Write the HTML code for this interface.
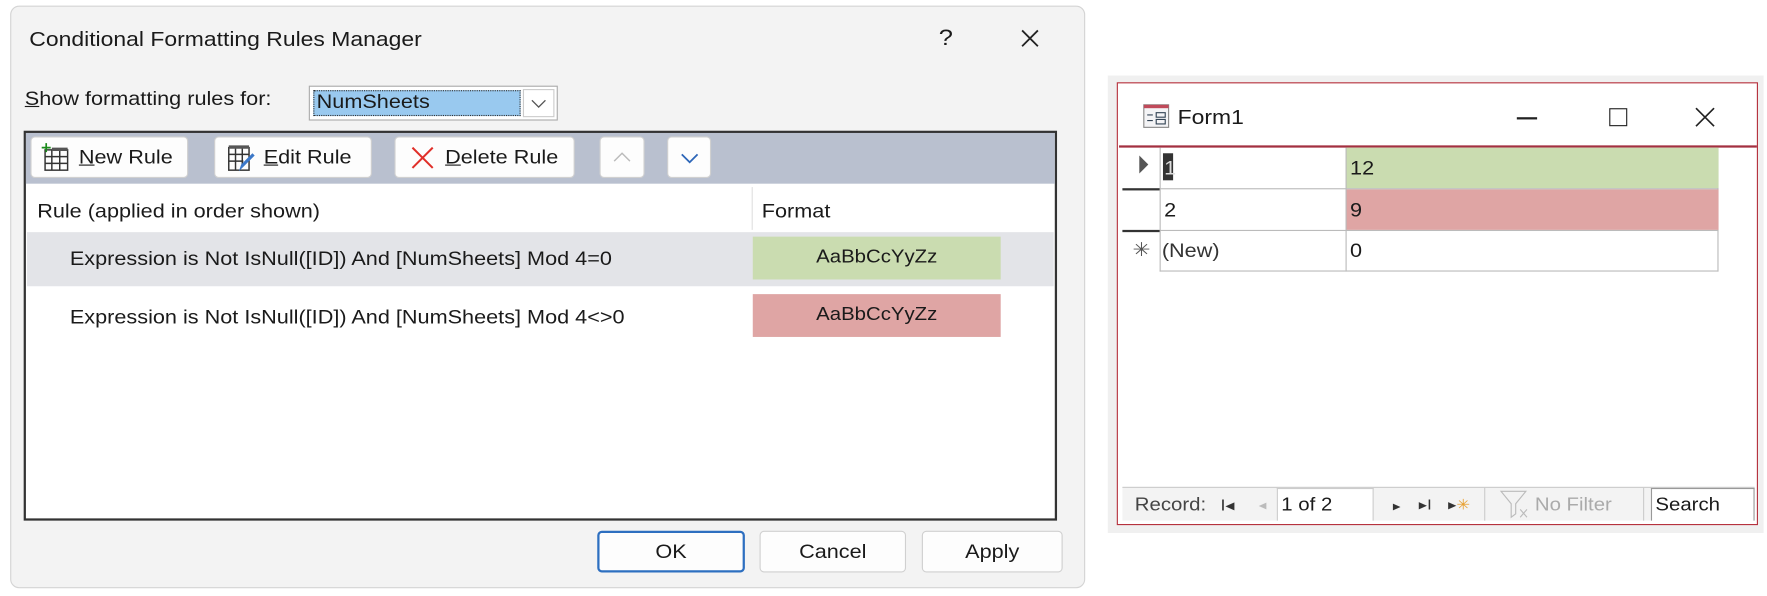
<!DOCTYPE html>
<html><head><meta charset="utf-8"><style>
*{box-sizing:border-box;margin:0;padding:0}
html,body{width:1767px;height:596px;overflow:hidden;background:#fff}
#w{position:absolute;left:0;top:0;width:1568px;height:529px;transform:scale(1.12691);transform-origin:0 0;font-family:"Liberation Sans",sans-serif;color:#1a1a1a}
.a{position:absolute}
.t{position:absolute;white-space:nowrap;font-size:17px;line-height:20px;transform:scaleX(1.13);transform-origin:0 50%}
.c{transform-origin:50% 50%}
.btn{position:absolute;background:#fdfdfd;border:1px solid #d0d0d0;border-radius:4px}
u{text-decoration:underline}
</style></head><body><div id="w">
<!-- Dialog -->
<div class="a" style="left:9px;top:5px;width:954px;height:517px;background:#f3f3f3;border:1px solid #d4d4d4;border-radius:8px"></div>
<div class="t" style="left:26px;top:25px;font-size:18px">Conditional Formatting Rules Manager</div>
<div class="t" style="left:833px;top:24px;font-size:20px">?</div>
<svg class="a" style="left:905px;top:25px" width="18" height="18"><path d="M2 2L16 16M16 2L2 16" stroke="#222" stroke-width="1.6"/></svg>
<div class="t" style="left:22px;top:78px"><u>S</u>how formatting rules for:</div>
<div class="a" style="left:274px;top:76px;width:221px;height:31px;background:#fff;border:1px solid #aaa"></div>
<div class="a" style="left:278px;top:80px;width:184px;height:23px;background:#99c9ef;border:1px dotted #333"></div>
<div class="t" style="left:281px;top:81px">NumSheets</div>
<div class="a" style="left:464px;top:79px;width:28px;height:25px;border:1px solid #ccc;background:#fff"></div>
<svg class="a" style="left:470px;top:86px" width="16" height="12"><path d="M2 3L8 9L14 3" stroke="#555" fill="none" stroke-width="1.2"/></svg>

<div class="a" style="left:21px;top:116px;width:917px;height:346px;border:2px solid #333;background:#fff"></div>
<div class="a" style="left:23px;top:118px;width:913px;height:45px;background:#b9c0cf"></div>
<div class="btn" style="left:27px;top:121px;width:140px;height:37px"></div>
<svg class="a" style="left:36px;top:126px" width="28" height="28"><g stroke="#333" fill="none" stroke-width="1.3"><rect x="4" y="7" width="20" height="18"/><path d="M4 13H24M4 19H24M10 7V25M17 7V25"/></g><rect x="10" y="5" width="14" height="3" fill="#555"/><path d="M5 1V9M1 5H9" stroke="#1a8a1a" stroke-width="1.5"/></svg>
<div class="t" style="left:70px;top:130px"><u>N</u>ew Rule</div>
<div class="btn" style="left:190px;top:121px;width:140px;height:37px"></div>
<svg class="a" style="left:200px;top:126px" width="28" height="28"><g stroke="#333" fill="none" stroke-width="1.3"><rect x="3" y="5" width="18" height="20"/><path d="M3 11H21M3 17H16M9 5V25M15 5V20"/></g><rect x="3" y="3" width="18" height="3" fill="#555"/><path d="M12 26L14 20L24 10L26 12L16 22Z" fill="#3c78c8"/></svg>
<div class="t" style="left:234px;top:130px"><u>E</u>dit Rule</div>
<div class="btn" style="left:350px;top:121px;width:160px;height:37px"></div>
<svg class="a" style="left:364px;top:129px" width="22" height="22"><path d="M2 2L20 20M20 2L2 20" stroke="#e0302a" stroke-width="1.8"/></svg>
<div class="t" style="left:395px;top:130px"><u>D</u>elete Rule</div>
<div class="btn" style="left:532px;top:121px;width:40px;height:37px"></div>
<svg class="a" style="left:543px;top:133px" width="18" height="12"><path d="M2 10L9 3L16 10" stroke="#bbb" fill="none" stroke-width="1.3"/></svg>
<div class="btn" style="left:592px;top:121px;width:39px;height:37px"></div>
<svg class="a" style="left:603px;top:134px" width="18" height="12"><path d="M2 3L9 10L16 3" stroke="#2d66b8" fill="none" stroke-width="1.6"/></svg>

<div class="t" style="left:33px;top:178px">Rule (applied in order shown)</div>
<div class="a" style="left:667px;top:166px;width:1px;height:38px;background:#e0e0e0"></div>
<div class="t" style="left:676px;top:178px">Format</div>
<div class="a" style="left:24px;top:206px;width:911px;height:48px;background:#e3e4e8"></div>
<div class="t" style="left:62px;top:220px">Expression is Not IsNull([ID]) And [NumSheets] Mod 4=0</div>
<div class="a" style="left:668px;top:210px;width:220px;height:38px;background:#cadcb0"></div>
<div class="t c" style="left:668px;top:219px;width:220px;text-align:center;font-size:16px">AaBbCcYyZz</div>
<div class="t" style="left:62px;top:272px">Expression is Not IsNull([ID]) And [NumSheets] Mod 4&lt;&gt;0</div>
<div class="a" style="left:668px;top:261px;width:220px;height:38px;background:#dfa5a4"></div>
<div class="t c" style="left:668px;top:270px;width:220px;text-align:center;font-size:16px">AaBbCcYyZz</div>

<div class="btn" style="left:530px;top:471px;width:131px;height:37px;border:2px solid #2d6fc0"></div>
<div class="t c" style="left:530px;top:480px;width:131px;text-align:center">OK</div>
<div class="btn" style="left:674px;top:471px;width:130px;height:37px"></div>
<div class="t c" style="left:674px;top:480px;width:130px;text-align:center">Cancel</div>
<div class="btn" style="left:818px;top:471px;width:125px;height:37px"></div>
<div class="t c" style="left:818px;top:480px;width:125px;text-align:center">Apply</div>

<!-- Form -->
<div class="a" style="left:983px;top:67px;width:582px;height:406px;background:#f0f0f0"></div>
<div class="a" style="left:991px;top:73px;width:569px;height:393px;background:#fff;border:1.5px solid #b5303c"></div>
<svg class="a" style="left:1014px;top:92px" width="24" height="22"><rect x="1" y="1" width="22" height="20" fill="#f4f4f6" stroke="#888"/><rect x="1" y="1" width="22" height="3" fill="#c04a5a"/><path d="M4 10H9M4 15H9M12 8H20V12H12ZM12 14H20V18H12Z" stroke="#345" fill="none"/></svg>
<div class="t" style="left:1045px;top:94px;font-size:18px">Form1</div>
<div class="a" style="left:1346px;top:104px;width:18px;height:1.5px;background:#222"></div>
<div class="a" style="left:1428px;top:96px;width:16px;height:16px;border:1.5px solid #222"></div>
<svg class="a" style="left:1504px;top:95px" width="18" height="18"><path d="M1 1L17 17M17 1L1 17" stroke="#222" stroke-width="1.5"/></svg>
<div class="a" style="left:993px;top:129px;width:566px;height:2px;background:#a33040"></div>
<!-- grid -->
<div class="a" style="left:1029px;top:131px;width:496px;height:110px;border-left:1px solid #bbb;border-bottom:1px solid #bbb;border-right:1px solid #bbb"></div>
<div class="a" style="left:1194px;top:131px;width:331px;height:36px;background:#cadcb0"></div>
<div class="a" style="left:1194px;top:168px;width:331px;height:36px;background:#dfa5a4"></div>
<div class="a" style="left:1029px;top:167px;width:496px;height:1px;background:#bbb"></div>
<div class="a" style="left:1029px;top:204px;width:496px;height:1px;background:#bbb"></div>
<div class="a" style="left:1194px;top:131px;width:1px;height:110px;background:#bbb"></div>
<div class="a" style="left:996px;top:167px;width:33px;height:1.5px;background:#333"></div>
<div class="a" style="left:996px;top:204px;width:33px;height:1.5px;background:#333"></div>
<svg class="a" style="left:1010px;top:137px" width="10" height="18"><path d="M1 1L9 9L1 17Z" fill="#555"/></svg>
<div class="a" style="left:1032px;top:136px;width:9px;height:24px;background:#333"></div>
<div class="t" style="left:1033px;top:140px;color:#ddd;font-size:17px">1</div>
<div class="t" style="left:1198px;top:140px">12</div>
<div class="t" style="left:1033px;top:177px">2</div>
<div class="t" style="left:1198px;top:177px">9</div>
<div class="t" style="left:1005px;top:212px;color:#555">✳</div>
<div class="t" style="left:1031px;top:213px;color:#333">(New)</div>
<div class="t" style="left:1198px;top:213px">0</div>
<!-- nav -->
<div class="a" style="left:996px;top:432px;width:561px;height:30px;background:#f3f3f3;border-top:1px solid #ccc"></div>
<div class="t" style="left:1007px;top:439px;color:#444;font-size:16px">Record:</div>
<div class="t" style="left:1083px;top:438px;color:#333;font-size:14px">I◂</div>
<div class="t" style="left:1117px;top:438px;color:#bbb;font-size:12px">◂</div>
<div class="a" style="left:1133px;top:433px;width:86px;height:29px;background:#fff;border:1px solid #ccc;border-bottom:none"></div>
<div class="t" style="left:1137px;top:439px;font-size:16px">1 of 2</div>
<div class="t" style="left:1236px;top:439px;color:#333;font-size:12px">▸</div>
<div class="t" style="left:1259px;top:438px;color:#333;font-size:13px">▸I</div>
<div class="t" style="left:1285px;top:438px;color:#333;font-size:13px">▸<span style="color:#e8a030">✳</span></div>
<div class="a" style="left:1317px;top:433px;width:1px;height:29px;background:#ccc"></div>
<svg class="a" style="left:1330px;top:434px" width="30" height="28"><path d="M2 2H24L15 13V22L11 25V13Z" stroke="#bbb" fill="none"/><path d="M19 18L25 25M25 18L19 25" stroke="#bbb"/></svg>
<div class="t" style="left:1362px;top:439px;color:#aaa;font-size:16px">No Filter</div>
<div class="a" style="left:1458px;top:433px;width:1px;height:29px;background:#ccc"></div>
<div class="a" style="left:1465px;top:433px;width:92px;height:29px;background:#fff;border:1px solid #999;border-bottom:none"></div>
<div class="t" style="left:1469px;top:439px;font-size:16px">Search</div>
</div></body></html>
